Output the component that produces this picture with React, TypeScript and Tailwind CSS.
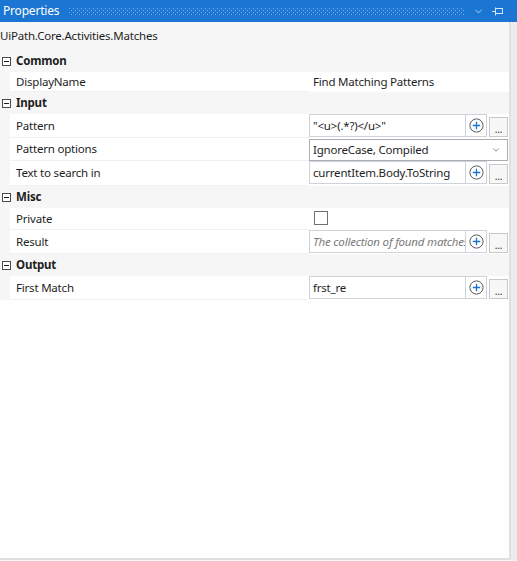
import { ChevronDown } from 'lucide-react'

type Prop = {
	label: string
	h: string
	kind: 'plain' | 'box' | 'combo' | 'check'
	value?: string
	placeholder?: boolean
}

type Category = {
	name: string
	props: Prop[]
}

const CATEGORIES: Category[] = [
	{
		name: 'Common',
		props: [{ label: 'DisplayName', h: 'h-[20px]', kind: 'plain', value: 'Find Matching Patterns' }]
	},
	{
		name: 'Input',
		props: [
			{ label: 'Pattern', h: 'h-[24px]', kind: 'box', value: '"<u>(.*?)</u>"' },
			{ label: 'Pattern options', h: 'h-[23px]', kind: 'combo', value: 'IgnoreCase, Compiled' },
			{ label: 'Text to search in', h: 'h-[25px]', kind: 'box', value: 'currentItem.Body.ToString' }
		]
	},
	{
		name: 'Misc',
		props: [
			{ label: 'Private', h: 'h-[22px]', kind: 'check' },
			{
				label: 'Result',
				h: 'h-[24px]',
				kind: 'box',
				value: 'The collection of found matches',
				placeholder: true
			}
		]
	},
	{
		name: 'Output',
		props: [{ label: 'First Match', h: 'h-[24px]', kind: 'box', value: 'frst_re' }]
	}
]

function Expander() {
	return (
		<svg width="9" height="9" viewBox="0 0 9 9" className="shrink-0">
			<rect x="0.5" y="0.5" width="8" height="8" fill="#fff" stroke="#4a4a4a" />
			<path d="M2 4.5h5" stroke="#1e1e1e" />
		</svg>
	)
}

function PlusIcon() {
	return (
		<svg width="15" height="15" viewBox="0 0 15 15">
			<circle cx="7.5" cy="7.5" r="6.6" fill="none" stroke="#5a5a5a" strokeWidth="1" />
			<path d="M7.5 3.8v7.4M3.8 7.5h7.4" stroke="#1a73d0" strokeWidth="1.3" />
		</svg>
	)
}

function TitleBar() {
	return (
		<div className="flex h-[22px] items-center bg-[#1a76d2] pl-[3px] text-white">
			<span className="text-[12px] leading-none">Properties</span>
			<svg className="ml-[10px] h-[7px] flex-1" preserveAspectRatio="none">
				<defs>
					<pattern id="dots" width="4" height="4" patternUnits="userSpaceOnUse">
						<rect x="0" y="0" width="1" height="1" fill="#7fb2e6" />
						<rect x="2" y="2" width="1" height="1" fill="#7fb2e6" />
					</pattern>
				</defs>
				<rect width="100%" height="100%" fill="url(#dots)" />
			</svg>
			<div className="flex w-[52px] items-center pl-[8px]">
				<ChevronDown className="size-[11px] text-[#b9d5f2]" strokeWidth={2} />
				<svg width="12" height="9" viewBox="0 0 12 9" className="ml-[8px]">
					<path d="M0 4.5h3.5" stroke="#d6e6f7" />
					<rect x="3.5" y="1.5" width="7" height="5" fill="none" stroke="#d6e6f7" />
					<path d="M3.5 0.5v8" stroke="#d6e6f7" />
				</svg>
			</div>
		</div>
	)
}

function ValueCell({ prop }: { prop: Prop }) {
	if (prop.kind === 'plain') {
		return <div className="pl-[4px] text-[#1e1e1e]">{prop.value}</div>
	}
	if (prop.kind === 'check') {
		return (
			<div className="pl-[5px] pt-[3px]">
				<div className="size-[14px] border border-[#707070] bg-white" />
			</div>
		)
	}
	if (prop.kind === 'combo') {
		return (
			<div className="mt-px flex h-[22px] w-[199px] items-center border border-[#abadb3] bg-white pl-[3px] pr-[6px]">
				<span className="flex-1 text-[#1e1e1e]">{prop.value}</span>
				<ChevronDown className="size-[10px] text-[#555]" strokeWidth={1.6} />
			</div>
		)
	}
	return (
		<div className="flex items-start">
			<div className="flex h-[23px] w-[178px] border border-[#ccd3db] bg-white">
				<div
					className={`flex min-w-0 flex-1 items-center overflow-hidden whitespace-nowrap pl-[3px] ${
						prop.placeholder ? 'italic text-[#7a7a7a]' : 'text-[#1e1e1e]'
					}`}
				>
					{prop.value}
				</div>
				<div className="flex w-[21px] shrink-0 items-center justify-center border-l border-[#ccd3db]">
					<PlusIcon />
				</div>
			</div>
			<div className="ml-[2px] mt-[3px] flex h-[20px] w-[19px] items-end justify-center border border-[#c8c8c8] bg-[#f7f7f7] pb-[2px] text-[10px] leading-none text-[#333]">
				...
			</div>
		</div>
	)
}

function PropRow({ prop }: { prop: Prop }) {
	return (
		<div className={`flex ${prop.h} ml-[10px] bg-white`}>
			<div className="flex w-[299px] items-center border-b border-[#f0f0f0] pl-[6px] text-[#1e1e1e]">
				{prop.label}
			</div>
			<div className={`flex flex-1 ${prop.kind === 'plain' ? 'items-center' : 'items-start'}`}>
				<ValueCell prop={prop} />
			</div>
		</div>
	)
}

export default function App() {
	return (
		<div
			className="flex h-[561px] w-[517px] flex-col overflow-hidden bg-[#f4f4f4] text-[11.5px] tracking-[-0.2px]"
			style={{ fontFamily: '"Noto Sans", "Open Sans", sans-serif' }}
		>
			<TitleBar />
			<div className="flex flex-1">
				<div className="flex w-[509px] flex-col">
					<div className="flex h-[28px] items-center bg-[#f6f6f6] text-[#1e1e1e]">
						UiPath.Core.Activities.Matches
					</div>
					<div className="bg-[#f6f6f6]">
						{CATEGORIES.map((cat) => (
							<div key={cat.name}>
								<div className="flex h-[22px] items-center gap-[5px] pl-[2px]">
									<Expander />
									<span className="font-bold text-[#1e1e1e]">{cat.name}</span>
								</div>
								{cat.props.map((p) => (
									<PropRow key={p.label} prop={p} />
								))}
							</div>
						))}
					</div>
					<div className="flex-1 bg-[#fefefe]" />
					<div className="h-[2px] bg-[#e0e0e0]" />
				</div>
				<div className="w-[2px] bg-[#e0e0e0]" />
				<div className="flex-1 bg-[#ececec]" />
			</div>
			<div className="h-[1px] bg-[#f4f4f4]" />
		</div>
	)
}
